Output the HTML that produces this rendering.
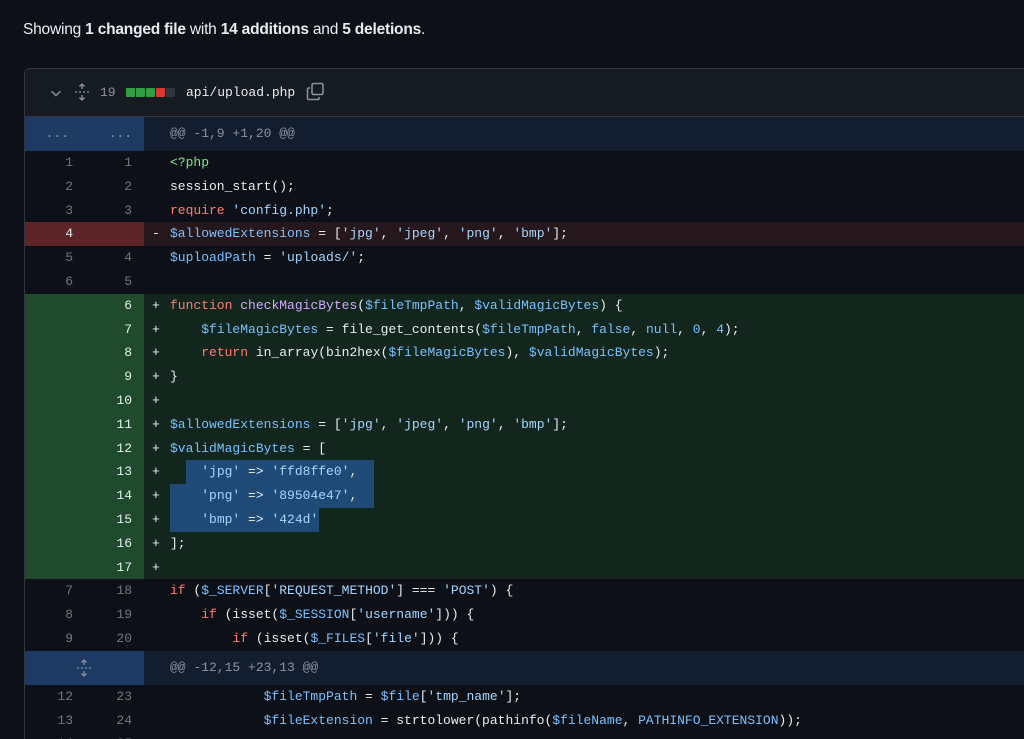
<!DOCTYPE html>
<html><head><meta charset="utf-8"><style>
*{margin:0;padding:0;box-sizing:border-box}
html,body{width:1024px;height:739px;overflow:hidden}
body{background:#0d1117;font-family:"Liberation Sans",sans-serif;color:#e6edf3;position:relative}
.top{position:absolute;left:23px;top:21px;font-size:15.5px;color:#e6edf3;letter-spacing:-0.2px}
.top b{font-weight:bold}
.box{position:absolute;left:24px;top:68px;width:1100px;height:700px;border:1px solid #30363d;border-radius:6px;overflow:hidden;background:#0d1117}
.hdr{height:48px;background:#161b22;border-bottom:1px solid #30363d;position:relative;font-family:"Liberation Mono",monospace;font-size:13px;color:#e6edf3}
.hdr span{position:absolute;top:16px}
.sq{position:absolute;top:19px;width:9px;height:9px;border-radius:1px}
.row{position:absolute;left:0;width:1100px;height:23.8px;font-family:"Liberation Mono",monospace;font-size:13px;line-height:23.8px;white-space:pre}
.g1,.g2{position:absolute;top:0;height:100%;text-align:right;color:#6e7681}
.g1{left:0;width:48px}.g2{left:59px;width:48px}
.gut{position:absolute;left:0;top:0;width:119px;height:100%}
.m{position:absolute;left:127px;top:0;color:#e6edf3}
.c{position:absolute;left:145px;top:0}
.add .gut{background:#1f4a2b}.add{background:#12261e}
.add .g1,.add .g2,.del .g1{color:#e6edf3}
.del .gut{background:#5c2426}.del{background:#25171c}
.hunk{height:34px;line-height:34px;background:#121d2f}
.hunk .gut{background:#1d3a63}
.hunk .c{color:#8b949e}
.k{color:#ff7b72}.v{color:#79c0ff}.s{color:#a5d6ff}.f{color:#d2a8ff}.gr{color:#7ee787}
.sel{position:absolute;background:#1f4a77;height:23.8px}
</style></head><body>
<div class="top">Showing <b>1 changed file</b> with <b>14 additions</b> and <b>5 deletions</b>.</div>
<div class="box">
<div class="hdr">
<svg style="position:absolute;left:24px;top:17px" width="14" height="14" viewBox="0 0 16 16"><path d="M3 6l5 5 5-5" fill="none" stroke="#8b949e" stroke-width="1.6"/></svg>
<svg style="position:absolute;left:49px;top:14px" width="16" height="18" viewBox="0 0 16 18"><path d="M8 1v5M5.5 3.5L8 1l2.5 2.5M8 17v-5M5.5 14.5L8 17l2.5-2.5" fill="none" stroke="#8b949e" stroke-width="1.3"/><path d="M1 9h2M5 9h2M9 9h2M13 9h2" stroke="#8b949e" stroke-width="1.3"/></svg>
<span style="left:75px;color:#8b949e">19</span>
<div class="sq" style="left:101px;background:#2ea043"></div>
<div class="sq" style="left:111px;background:#2ea043"></div>
<div class="sq" style="left:121px;background:#2ea043"></div>
<div class="sq" style="left:131px;background:#da3633"></div>
<div class="sq" style="left:141px;background:#30363d"></div>
<span style="left:161px">api/upload.php</span>
<svg style="position:absolute;left:281px;top:13px" width="19" height="19" viewBox="0 0 19 19"><rect x="6" y="1.5" width="11" height="11" rx="1.5" fill="none" stroke="#8b949e" stroke-width="1.5"/><path d="M4 6H2.5a1 1 0 0 0-1 1v9.5a1 1 0 0 0 1 1H12a1 1 0 0 0 1-1V15" fill="none" stroke="#8b949e" stroke-width="1.5"/></svg>
</div>
<div class="row hunk" style="top:48px"><div class="gut"></div><span class="g1" style="color:#8b949e;width:44px">...</span><span class="g2" style="color:#8b949e;width:48px">...</span><span class="c">@@ -1,9 +1,20 @@</span></div>

<div class="row" style="top:82px"><span class="g1">1</span><span class="g2">1</span><span class="c"><span class="gr">&lt;?php</span></span></div>
<div class="row" style="top:105.8px"><span class="g1">2</span><span class="g2">2</span><span class="c">session_start();</span></div>
<div class="row" style="top:129.6px"><span class="g1">3</span><span class="g2">3</span><span class="c"><span class="k">require</span> <span class="s">'config.php'</span>;</span></div>
<div class="row del" style="top:153.4px"><div class="gut"></div><span class="g1">4</span><span class="g2"></span><span class="m">-</span><span class="c"><span class="v">$allowedExtensions</span> = [<span class="s">'jpg'</span>, <span class="s">'jpeg'</span>, <span class="s">'png'</span>, <span class="s">'bmp'</span>];</span></div>
<div class="row" style="top:177.2px"><span class="g1">5</span><span class="g2">4</span><span class="c"><span class="v">$uploadPath</span> = <span class="s">'uploads/'</span>;</span></div>
<div class="row" style="top:201px"><span class="g1">6</span><span class="g2">5</span><span class="c"></span></div>

<div class="row add" style="top:224.8px"><div class="gut"></div><span class="g2">6</span><span class="m">+</span><span class="c"><span class="k">function</span> <span class="f">checkMagicBytes</span>(<span class="v">$fileTmpPath</span>, <span class="v">$validMagicBytes</span>) {</span></div>
<div class="row add" style="top:248.6px"><div class="gut"></div><span class="g2">7</span><span class="m">+</span><span class="c">    <span class="v">$fileMagicBytes</span> = file_get_contents(<span class="v">$fileTmpPath</span>, <span class="v">false</span>, <span class="v">null</span>, <span class="v">0</span>, <span class="v">4</span>);</span></div>
<div class="row add" style="top:272.4px"><div class="gut"></div><span class="g2">8</span><span class="m">+</span><span class="c">    <span class="k">return</span> in_array(bin2hex(<span class="v">$fileMagicBytes</span>), <span class="v">$validMagicBytes</span>);</span></div>
<div class="row add" style="top:296.2px"><div class="gut"></div><span class="g2">9</span><span class="m">+</span><span class="c">}</span></div>
<div class="row add" style="top:320px"><div class="gut"></div><span class="g2">10</span><span class="m">+</span><span class="c"></span></div>
<div class="row add" style="top:343.8px"><div class="gut"></div><span class="g2">11</span><span class="m">+</span><span class="c"><span class="v">$allowedExtensions</span> = [<span class="s">'jpg'</span>, <span class="s">'jpeg'</span>, <span class="s">'png'</span>, <span class="s">'bmp'</span>];</span></div>
<div class="row add" style="top:367.6px"><div class="gut"></div><span class="g2">12</span><span class="m">+</span><span class="c"><span class="v">$validMagicBytes</span> = [</span></div>
<div class="row add" style="top:391.4px"><div class="gut"></div><div class="sel" style="left:161px;width:188px;top:0"></div><span class="g2">13</span><span class="m">+</span><span class="c">    <span class="s">'jpg'</span> =&gt; <span class="s">'ffd8ffe0'</span>,</span></div>
<div class="row add" style="top:415.2px"><div class="gut"></div><div class="sel" style="left:145px;width:204px;top:0"></div><span class="g2">14</span><span class="m">+</span><span class="c">    <span class="s">'png'</span> =&gt; <span class="s">'89504e47'</span>,</span></div>
<div class="row add" style="top:439px"><div class="gut"></div><div class="sel" style="left:145px;width:149px;top:0"></div><span class="g2">15</span><span class="m">+</span><span class="c">    <span class="s">'bmp'</span> =&gt; <span class="s">'424d'</span></span></div>
<div class="row add" style="top:462.8px"><div class="gut"></div><span class="g2">16</span><span class="m">+</span><span class="c">];</span></div>
<div class="row add" style="top:486.6px"><div class="gut"></div><span class="g2">17</span><span class="m">+</span><span class="c"></span></div>

<div class="row" style="top:510.4px"><span class="g1">7</span><span class="g2">18</span><span class="c"><span class="k">if</span> (<span class="v">$_SERVER</span>[<span class="s">'REQUEST_METHOD'</span>] === <span class="s">'POST'</span>) {</span></div>
<div class="row" style="top:534.2px"><span class="g1">8</span><span class="g2">19</span><span class="c">    <span class="k">if</span> (isset(<span class="v">$_SESSION</span>[<span class="s">'username'</span>])) {</span></div>
<div class="row" style="top:558px"><span class="g1">9</span><span class="g2">20</span><span class="c">        <span class="k">if</span> (isset(<span class="v">$_FILES</span>[<span class="s">'file'</span>])) {</span></div>
<div class="row hunk" style="top:581.8px"><div class="gut"></div><svg style="position:absolute;left:51px;top:8px" width="16" height="18" viewBox="0 0 16 18"><path d="M8 1v5M5.5 3.5L8 1l2.5 2.5M8 17v-5M5.5 14.5L8 17l2.5-2.5" fill="none" stroke="#8b949e" stroke-width="1.3"/><path d="M1 9h2M5 9h2M9 9h2M13 9h2" stroke="#8b949e" stroke-width="1.3"/></svg><span class="c">@@ -12,15 +23,13 @@</span></div>
<div class="row" style="top:615.8px"><span class="g1">12</span><span class="g2">23</span><span class="c">            <span class="v">$fileTmpPath</span> = <span class="v">$file</span>[<span class="s">'tmp_name'</span>];</span></div>
<div class="row" style="top:639.6px"><span class="g1">13</span><span class="g2">24</span><span class="c">            <span class="v">$fileExtension</span> = strtolower(pathinfo(<span class="v">$fileName</span>, <span class="v">PATHINFO_EXTENSION</span>));</span></div>
<div class="row" style="top:663.4px"><span class="g1">14</span><span class="g2">25</span><span class="c"></span></div>
</div>
</body></html>
